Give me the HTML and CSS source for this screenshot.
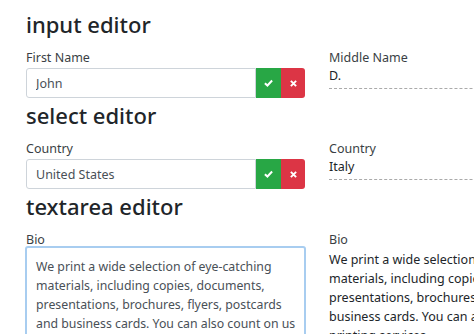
FILE: index.html
```html
<!DOCTYPE html>
<html lang="en">
<head>
    <meta charset="UTF-8">
    <meta name="viewport" content="width=device-width, initial-scale=1.0">
    <title>Editors</title>
    <link rel="stylesheet" href="styles.css">
</head>
<body>
    <div class="page">
        <h3>input editor</h3>
        <div class="row">
            <div class="col">
                <label>First Name</label>
                <div class="input-group">
                    <input type="text" class="form-control" value="John">
                    <button class="btn btn-ok"><svg viewBox="0 0 10 8" width="9" height="8"><path d="M1 4.2 L3.8 6.8 L9 1.2" fill="none" stroke="#fff" stroke-width="2.2"/></svg></button>
                    <button class="btn btn-cancel"><svg viewBox="0 0 8 8" width="7" height="7"><path d="M1 1 L7 7 M7 1 L1 7" fill="none" stroke="#fff" stroke-width="2.2"/></svg></button>
                </div>
            </div>
            <div class="col">
                <label>Middle Name</label>
                <div class="editable">D.</div>
            </div>
        </div>

        <h3>select editor</h3>
        <div class="row">
            <div class="col">
                <label>Country</label>
                <div class="input-group">
                    <select class="form-control">
                        <option selected>United States</option>
                        <option>Italy</option>
                    </select>
                    <button class="btn btn-ok"><svg viewBox="0 0 10 8" width="9" height="8"><path d="M1 4.2 L3.8 6.8 L9 1.2" fill="none" stroke="#fff" stroke-width="2.2"/></svg></button>
                    <button class="btn btn-cancel"><svg viewBox="0 0 8 8" width="7" height="7"><path d="M1 1 L7 7 M7 1 L1 7" fill="none" stroke="#fff" stroke-width="2.2"/></svg></button>
                </div>
            </div>
            <div class="col">
                <label>Country</label>
                <div class="editable">Italy</div>
            </div>
        </div>

        <h3>textarea editor</h3>
        <div class="row">
            <div class="col">
                <label>Bio</label>
                <textarea class="form-control bio" rows="6">We print a wide selection of eye-catching materials, including copies, documents, presentations, brochures, flyers, postcards and business cards. You can also count on us for printing services.</textarea>
            </div>
            <div class="col">
                <label>Bio</label>
                <div class="editable text">We print a wide selection of eye-catching materials, including copies, documents, presentations, brochures, flyers, postcards and business cards. You can also count on us for printing services.</div>
            </div>
        </div>
    </div>
</body>
</html>
```

FILE: styles.css
```css
body {
    margin: 0;
    font-family: "Noto Sans", sans-serif;
    color: #212529;
    background: #fff;
    overflow: hidden;
}
.page {
    padding: 11px 0 0 26px;
    width: 600px;
}
h3 {
    font-size: 22px;
    font-weight: 500;
    line-height: 27px;
    margin: 0 0 12px 0;
}
.row {
    display: flex;
    gap: 24px;
    margin-bottom: 4px;
}
.col {
    width: 279px;
}
label {
    display: block;
    font-size: 12.5px;
    line-height: 16px;
    color: #3a3f44;
    margin-bottom: 2px;
}
.input-group {
    display: flex;
    height: 30px;
}
.form-control {
    box-sizing: border-box;
    font-family: "Noto Sans", sans-serif;
    font-size: 12.5px;
    color: #495057;
    border: 1px solid #ced4da;
    background: #fff;
}
.input-group .form-control {
    width: 230px;
    height: 30px;
    padding: 0 9px;
    border-radius: 3px 0 0 3px;
    outline: none;
    appearance: none;
    -webkit-appearance: none;
}
.btn {
    border: none;
    padding: 0;
    height: 30px;
    display: flex;
    align-items: center;
    justify-content: center;
}
.btn-ok {
    width: 25px;
    background: #28a745;
}
.btn-cancel {
    width: 24px;
    background: #dc3545;
    border-radius: 0 3px 3px 0;
}
.editable {
    font-size: 12.5px;
    line-height: 16px;
    padding-bottom: 4px;
    border-bottom: 1px dashed #aaa;
}
.editable.text {
    border-bottom: none;
    line-height: 19px;
}
.bio {
    display: block;
    width: 281px;
    margin: -4px 0 0 -1px;
    padding: 9px 3px 7px 9px;
    font-size: 12.3px;
    line-height: 19px;
    border-color: #a8cdf0;
    border-width: 2px;
    border-radius: 3px;
    resize: none;
    outline: none;
}
```
